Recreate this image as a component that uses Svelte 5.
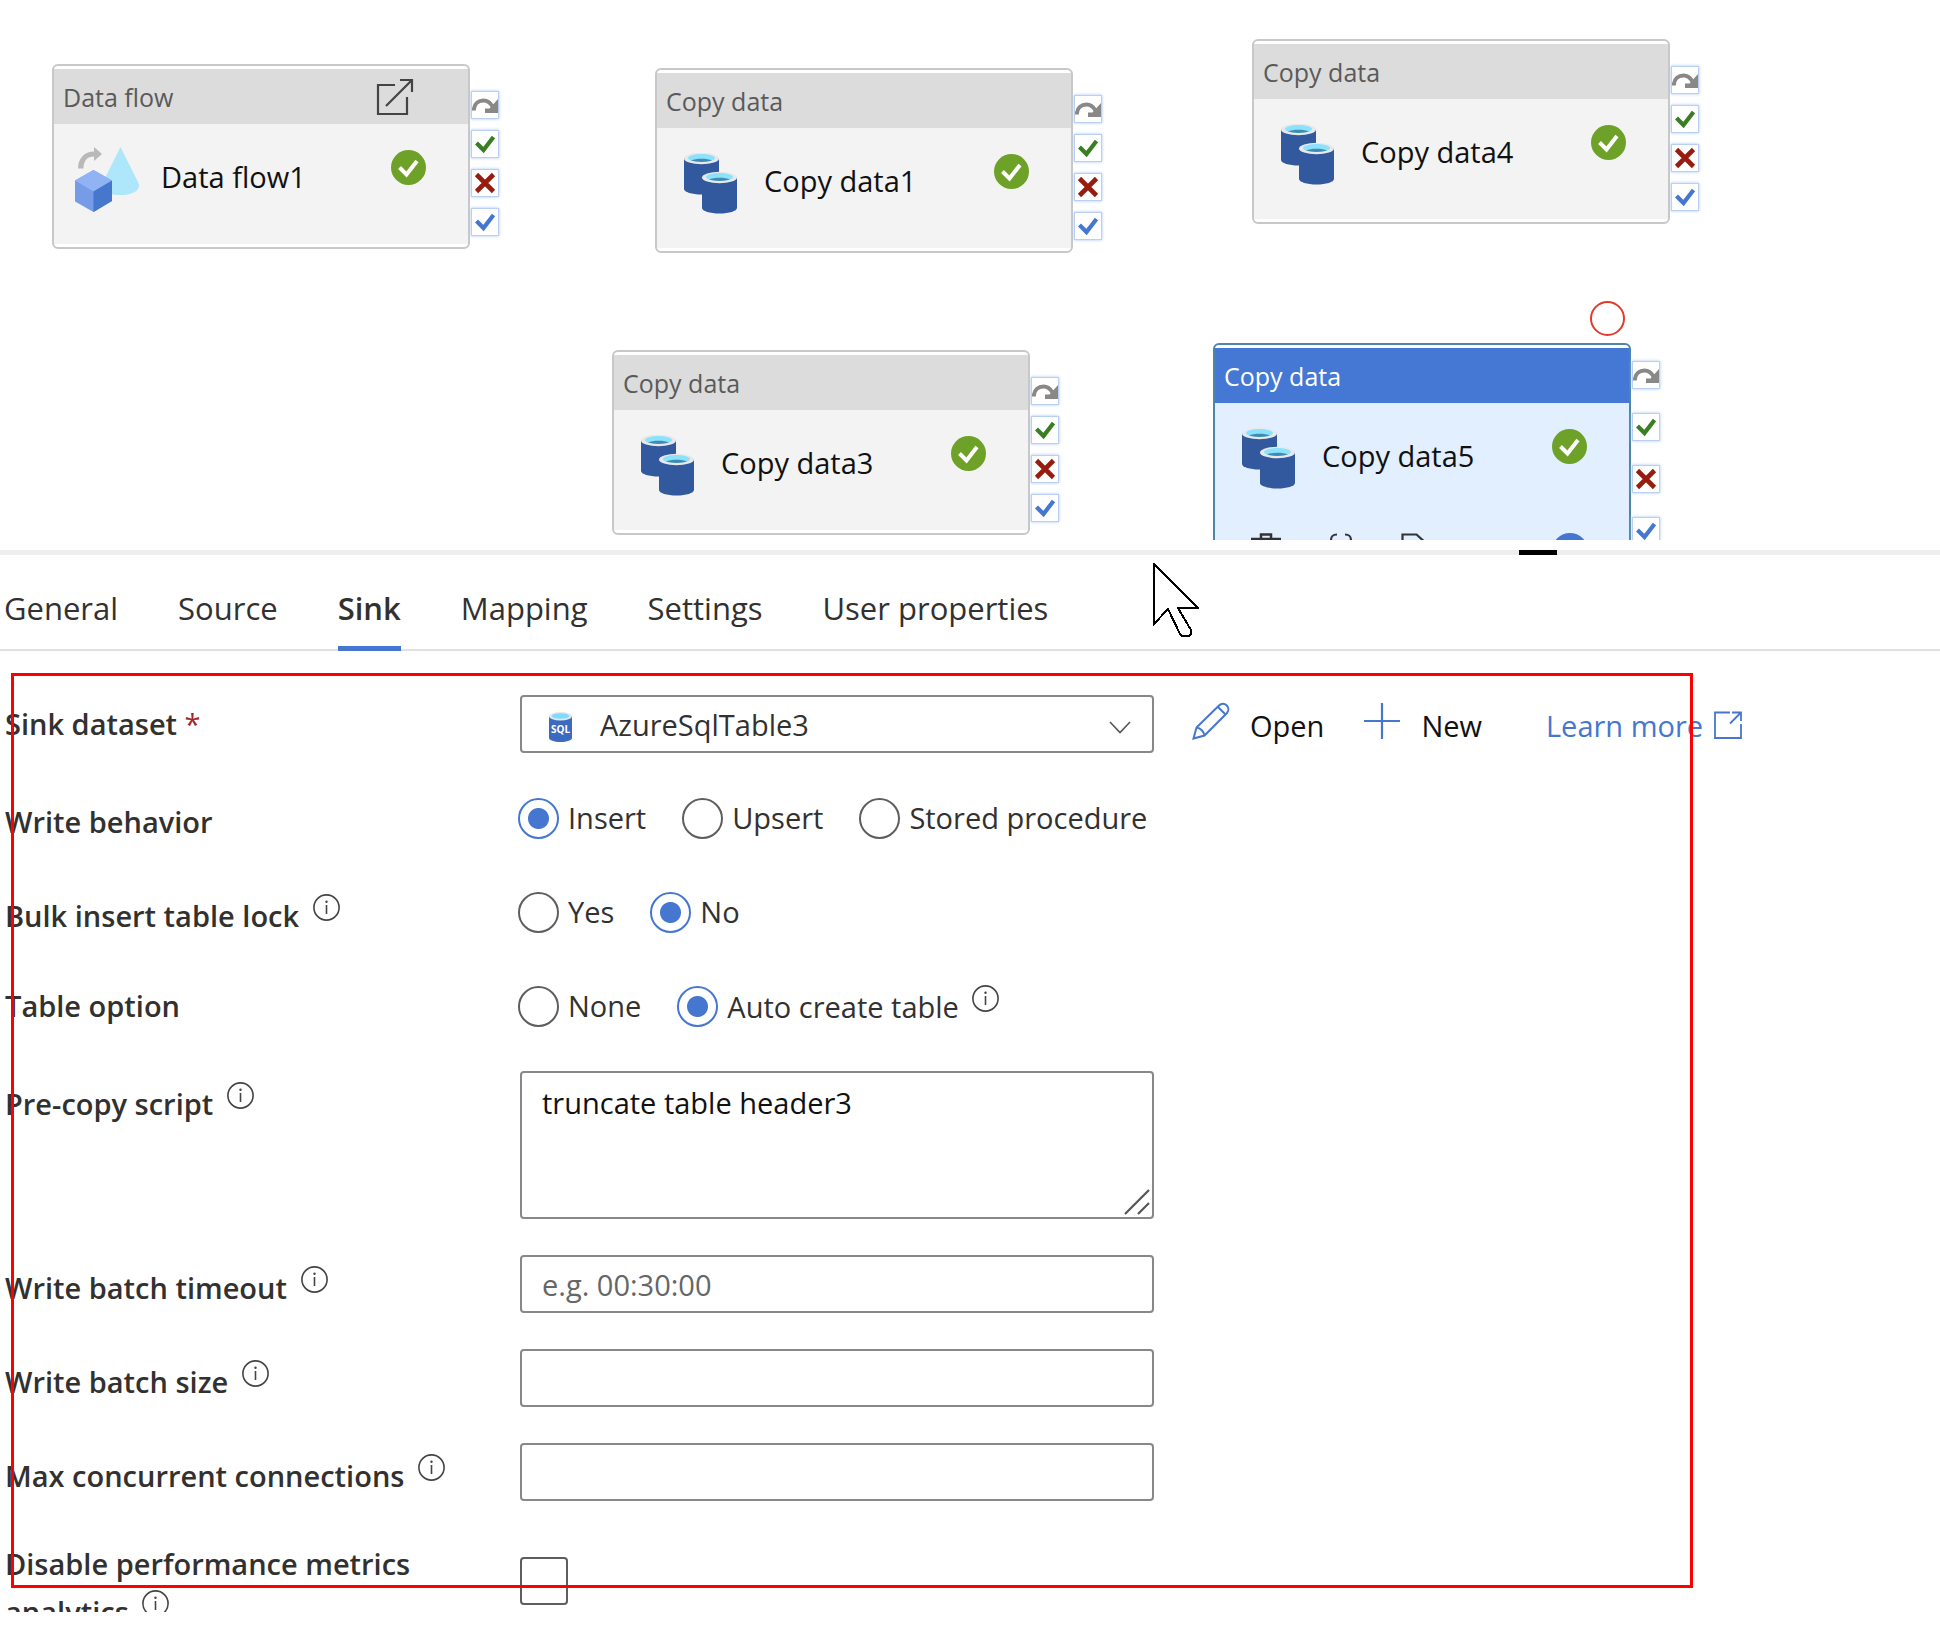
<script>
    const activities = [
        { type: "Data flow", name: "Data flow1", icon: "flow", x: 52, y: 64, open: true },
        { type: "Copy data", name: "Copy data1", icon: "copy", x: 655, y: 68 },
        { type: "Copy data", name: "Copy data4", icon: "copy", x: 1252, y: 39 },
        { type: "Copy data", name: "Copy data3", icon: "copy", x: 612, y: 350 },
        { type: "Copy data", name: "Copy data5", icon: "copy", x: 1213, y: 343, selected: true },
    ];

    const ports = ["skip", "success", "failure", "completion"];

    const tabs = ["General", "Source", "Sink", "Mapping", "Settings", "User properties"];
    let activeTab = $state("Sink");

    let dataset = $state("AzureSqlTable3");
    let writeBehavior = $state("Insert");
    let tableLock = $state("No");
    let tableOption = $state("Auto create table");
    let preCopyScript = $state("truncate table header3");
    let batchTimeout = $state("");
    let batchSize = $state("");
    let maxConnections = $state("");
    let disableMetrics = $state(false);
</script>

{#snippet info()}
    <svg class="info" viewBox="0 0 27 27" aria-hidden="true">
        <circle cx="13.5" cy="13.5" r="12.6" fill="none" stroke="#444" stroke-width="1.6" />
        <path d="M13.5 11v9" stroke="#444" stroke-width="1.6" />
        <circle cx="13.5" cy="7.8" r="1.2" fill="#444" />
    </svg>
{/snippet}

{#snippet port(kind)}
    <span class="port">
        <svg viewBox="0 0 26 26" aria-hidden="true">
            {#if kind === "skip"}
                <path d="M1.8 18.5C2 11 7 8.500 11.500 8.500C16 8.500 18.500 11 20.500 14.500" fill="none" stroke="#8a8886" stroke-width="4" />
                <path d="M26 7v14H13v-4.500h4.500z" fill="#8a8886" />
            {:else if kind === "failure"}
                <path d="M4.500 4.500l17 17M21.500 4.500l-17 17" stroke="#981b0f" stroke-width="4.600" />
            {:else}
                <path d="M4.500 12l7 7L21.500 6" fill="none" stroke={kind === "success" ? "#3b7d23" : "#4577d0"} stroke-width="4.200" />
            {/if}
        </svg>
    </span>
{/snippet}

{#snippet barrel(x, y)}
    <path d="M{x} {y + 5}v31c0 3 8 5.500 17.500 5.500s17.500-2.500 17.500-5.500v-31z" fill="#32599e" />
    <ellipse cx={x + 17.5} cy={y + 5.5} rx="17.500" ry="5.800" fill="#e8e8e8" />
    <ellipse cx={x + 17.5} cy={y + 5} rx="13.500" ry="3.900" fill="#8be2fd" />
    <path d="M{x + 7} {y + 7.6}c5-2.600 16-2.600 21 0c-5 1.800-16 1.800-21 0z" fill="#3f8bb3" />
{/snippet}

<div class="page">
    <section class="canvas">
        {#each activities as activity}
            <div class="activity {activity.selected ? 'selected' : ''}" style="left: {activity.x}px; top: {activity.y}px">
                <div class="card">
                    <div class="card-header">
                        <span>{activity.type}</span>
                        {#if activity.open}
                            <button class="icon-button" aria-label="Open data flow">
                                <svg width="38" height="38" viewBox="0 0 38 38">
                                    <path d="M19 7H2v29h29V19M24 2h12v12M35.500 2.500L10 28" fill="none" stroke="#444" stroke-width="2.200" />
                                </svg>
                            </button>
                        {/if}
                    </div>
                    <div class="card-body">
                        <span class="card-icon">
                            {#if activity.icon === "flow"}
                                <svg width="65" height="65" viewBox="0 0 65 65" aria-hidden="true">
                                    <path d="M45.500 0l18 36c3 7-6 12-18 12s-21-5-18-12z" fill="#aee7fb" />
                                    <path d="M3 21.500C3 12 9 4.500 19 4.500V0l8 7-8 7V9.500C12 9.500 8.500 14 8.500 21.500z" fill="#b9b9b9" />
                                    <path d="M18.500 23L37 33.500V54L18.500 65 0 54.500V33.500z" fill="#769ce8" />
                                    <path d="M18.500 23L37 33.500 18.500 44.500 0 33.500z" fill="#92b3f3" />
                                    <path d="M37 33.500V54L18.500 65V44.500z" fill="#4577cd" />
                                </svg>
                            {:else}
                                <svg width="53" height="61" viewBox="0 0 53 61" aria-hidden="true">
                                    {@render barrel(0, 0)}
                                    {@render barrel(18, 19)}
                                </svg>
                            {/if}
                        </span>
                        <span class="name">{activity.name}</span>
                        <svg class="status" viewBox="0 0 35 35" aria-hidden="true">
                            <circle cx="17.500" cy="17.500" r="17.500" fill="#6ea127" />
                            <path d="M8.500 17.500l7 7L26 11" fill="none" stroke="#fff" stroke-width="4" />
                        </svg>
                    </div>
                    {#if activity.selected}
                        <div class="card-tools">
                            <button class="icon-button" aria-label="Delete">
                                <svg width="30" height="34" viewBox="0 0 30 34">
                                    <path d="M10 6V1.500h10V6M0 6h30M4 6v26h22V6" fill="none" stroke="#333" stroke-width="2.500" />
                                </svg>
                            </button>
                            <button class="icon-button" aria-label="View code">
                                <svg width="24" height="34" viewBox="0 0 24 34">
                                    <path d="M8 1.500c-5 0-6 2-6 6v5l-2 4M16 1.500c5 0 6 2 6 6v5l2 4" fill="none" stroke="#333" stroke-width="2.200" />
                                </svg>
                            </button>
                            <button class="icon-button" aria-label="Clone">
                                <svg width="28" height="34" viewBox="0 0 28 34">
                                    <path d="M1.500 34V1.500h14L26 11v23" fill="none" stroke="#333" stroke-width="2.200" />
                                </svg>
                            </button>
                            <button class="icon-button add" aria-label="Add output">
                                <svg width="36" height="36" viewBox="0 0 36 36">
                                    <circle cx="18" cy="18" r="18" fill="#4577d0" />
                                </svg>
                            </button>
                        </div>
                    {/if}
                </div>
                <div class="ports">
                    {#each ports as kind}
                        {@render port(kind)}
                    {/each}
                </div>
                {#if activity.selected}
                    <span class="breakpoint"></span>
                {/if}
            </div>
        {/each}
    </section>

    <div class="splitter"><span class="handle"></span></div>

    <nav class="tabs">
        {#each tabs as tab}
            <button class="tab {tab === activeTab ? 'active' : ''}" onclick={() => (activeTab = tab)}>{tab}</button>
        {/each}
        <svg class="pointer" viewBox="0 0 46 75" aria-hidden="true">
            <path d="M1 1V61L15 46L27 71L29 73H36L38 71V67L25 45H45z" fill="#fff" stroke="#000" stroke-width="2" shape-rendering="crispEdges" />
        </svg>
    </nav>

    <form class="settings" onsubmit={(e) => e.preventDefault()}>
        <div class="row">
            <label class="label compact" for="dataset">Sink dataset <span class="required">*</span></label>
            <div class="controls">
                <div class="box">
                    <svg class="sql" viewBox="0 0 23 30" aria-hidden="true">
                        <path d="M0 4v22c0 2.200 5 4 11.500 4S23 28.200 23 26V4z" fill="#3c6ac0" />
                        <ellipse cx="11.500" cy="4.300" rx="11.500" ry="4.300" fill="#e3e7ea" />
                        <ellipse cx="11.500" cy="4" rx="8.800" ry="2.800" fill="#7fdcf8" />
                        <text x="11.500" y="21" text-anchor="middle" font-size="10" font-weight="700" fill="#fff">SQL</text>
                    </svg>
                    <select id="dataset" bind:value={dataset}>
                        <option>AzureSqlTable3</option>
                    </select>
                    <svg class="chevron" viewBox="0 0 22 13" aria-hidden="true">
                        <path d="M1 1l10 10.500L21 1" fill="none" stroke="#555" stroke-width="1.600" />
                    </svg>
                </div>
                <div class="actions">
                    <button class="action" type="button">
                        <svg width="38" height="38" viewBox="0 0 38 38" aria-hidden="true">
                            <path d="M1.500 36.500l3-11L27 3.500c5-5 12.500 2 8 7.500L12.500 33.500zM4.500 25.500c4 .5 7.500 4 8 8M26 5l7.500 7.500" fill="none" stroke="#4577d0" stroke-width="2" />
                        </svg>
                        Open
                    </button>
                    <button class="action" type="button">
                        <svg width="38" height="38" viewBox="0 0 38 38" aria-hidden="true">
                            <path d="M19 1v36M1 19h36" stroke="#4577d0" stroke-width="2.200" />
                        </svg>
                        New
                    </button>
                    <a class="learn" href="#learn">
                        Learn more
                        <svg width="28" height="28" viewBox="0 0 28 28" aria-hidden="true">
                            <path d="M16 1.500H1V27h26V13M18 1.500h9V10M27 1.500L16 12.500" fill="none" stroke="#4577d0" stroke-width="1.800" />
                        </svg>
                    </a>
                </div>
            </div>
        </div>

        <div class="row" role="radiogroup" aria-labelledby="behavior-label">
            <span class="label" id="behavior-label">Write behavior</span>
            <div class="controls radios">
                {#each ["Insert", "Upsert", "Stored procedure"] as option}
                    <label><input type="radio" name="behavior" value={option} bind:group={writeBehavior} />{option}</label>
                {/each}
            </div>
        </div>

        <div class="row" role="radiogroup" aria-labelledby="lock-label">
            <span class="label" id="lock-label">Bulk insert table lock {@render info()}</span>
            <div class="controls radios">
                {#each ["Yes", "No"] as option}
                    <label><input type="radio" name="lock" value={option} bind:group={tableLock} />{option}</label>
                {/each}
            </div>
        </div>

        <div class="row" role="radiogroup" aria-labelledby="option-label">
            <span class="label compact" id="option-label">Table option</span>
            <div class="controls radios">
                <label><input type="radio" name="option" value="None" bind:group={tableOption} />None</label>
                <label>
                    <input type="radio" name="option" value="Auto create table" bind:group={tableOption} />
                    <span>Auto create table {@render info()}</span>
                </label>
            </div>
        </div>

        <div class="row">
            <label class="label" for="script">Pre-copy script {@render info()}</label>
            <div class="controls">
                <div class="box">
                    <textarea id="script" spellcheck="false" bind:value={preCopyScript}></textarea>
                    <svg class="grip" viewBox="0 0 26 26" aria-hidden="true">
                        <path d="M1 25L25 1M14 25L25 14" stroke="#555" stroke-width="2.200" />
                    </svg>
                </div>
            </div>
        </div>

        <div class="row">
            <label class="label" for="timeout">Write batch timeout {@render info()}</label>
            <div class="controls">
                <div class="box"><input id="timeout" type="text" placeholder="e.g. 00:30:00" bind:value={batchTimeout} /></div>
            </div>
        </div>

        <div class="row">
            <label class="label" for="size">Write batch size {@render info()}</label>
            <div class="controls">
                <div class="box"><input id="size" type="text" bind:value={batchSize} /></div>
            </div>
        </div>

        <div class="row">
            <label class="label" for="connections">Max concurrent connections {@render info()}</label>
            <div class="controls">
                <div class="box"><input id="connections" type="text" bind:value={maxConnections} /></div>
            </div>
        </div>

        <div class="row">
            <label class="label multiline" for="metrics">Disable performance metrics analytics {@render info()}</label>
            <div class="controls">
                <input id="metrics" type="checkbox" bind:checked={disableMetrics} />
            </div>
        </div>

        <div class="highlight"></div>
    </form>
</div>

<style>
    :global(body) {
        margin: 0;
        background: #fff;
    }

    .page {
        display: flex;
        flex-direction: column;
        height: 100vh;
        box-sizing: border-box;
        padding-bottom: 36px;
        overflow: hidden;
        font-family: "Segoe UI", "Open Sans", "Noto Sans", sans-serif;
        font-size: 29px;
        color: #323130;
    }

    button,
    input,
    select,
    textarea {
        box-sizing: border-box;
        margin: 0;
        font: inherit;
        color: inherit;
    }

    button {
        padding: 0;
        border: 0;
        background: none;
        cursor: pointer;
    }

    svg {
        flex: none;
    }

    /* pipeline canvas */
    .canvas {
        position: relative;
        flex: none;
        height: 540px;
        overflow: hidden;
    }

    .activity {
        position: absolute;
        display: flex;
        gap: 1px;
    }

    .card {
        box-sizing: border-box;
        width: 418px;
        height: 185px;
        padding: 3px 0;
        border: 2px solid #c8c8c8;
        border-radius: 6px;
        background: #fff;
    }

    .card-header {
        display: flex;
        align-items: center;
        justify-content: space-between;
        height: 55px;
        box-sizing: border-box;
        padding: 0 54px 0 9px;
        background: #dcdcdc;
        color: #5a5a5a;
        font-size: 25px;
    }

    .icon-button {
        display: flex;
    }

    .card-body {
        display: flex;
        height: 120px;
        padding: 0 42px 0 17px;
        background: #f3f3f3;
        color: #111;
        font-size: 29px;
    }

    .card-icon {
        display: flex;
        justify-content: center;
        align-items: center;
        width: 72px;
        height: 110px;
    }

    .name {
        flex: 1;
        padding-left: 18px;
        line-height: 106px;
    }

    .status {
        width: 35px;
        height: 35px;
        margin-top: 26px;
    }

    .selected .card {
        height: 250px;
        border-color: #4d86a9;
    }

    .selected .card-header {
        background: #4577d5;
        color: #fff;
    }

    .selected .card-body,
    .card-tools {
        background: #e1efff;
    }

    .card-tools {
        display: flex;
        gap: 48px;
        height: 54px;
        padding: 10px 41px 0 36px;
    }

    .add {
        margin-left: auto;
    }

    .ports {
        display: flex;
        flex-direction: column;
        gap: 11px;
        padding-top: 27px;
    }

    .selected .ports {
        gap: 24px;
        padding-top: 18px;
    }

    .port {
        display: flex;
        width: 26px;
        height: 26px;
        border: 1px solid #b9d0f2;
        background: #fff;
        box-shadow: 0 0 3px #a9c6f5;
    }

    .breakpoint {
        position: absolute;
        top: -42px;
        right: 35px;
        width: 31px;
        height: 31px;
        border: 2px solid #e23b2a;
        border-radius: 50%;
    }

    .splitter {
        flex: none;
        display: flex;
        justify-content: flex-end;
        height: 5px;
        margin-top: 10px;
        padding-right: 383px;
        background: #eee;
    }

    .handle {
        width: 38px;
        background: #000;
    }

    /* property tabs */
    .tabs {
        position: relative;
        flex: none;
        display: flex;
        gap: 60px;
        padding: 0 4px;
        height: 94px;
        border-bottom: 2px solid #e1e1e1;
        font-size: 31px;
    }

    .tab {
        box-sizing: border-box;
        height: 96px;
        padding-top: 14px;
        border-bottom: 5px solid transparent;
    }

    .tab.active {
        border-bottom-color: #4577d0;
        font-weight: 600;
    }

    .pointer {
        position: absolute;
        left: 1153px;
        top: 8px;
        width: 46px;
        height: 75px;
    }

    /* sink form */
    .settings {
        position: relative;
        flex: 1;
        min-height: 0;
        display: flex;
        flex-direction: column;
        gap: 36px;
        padding: 44px 0 0 5px;
        overflow: hidden;
    }

    .row {
        flex: none;
        display: flex;
        align-items: flex-start;
    }

    .label {
        flex: none;
        box-sizing: border-box;
        width: 515px;
        padding-top: 9px;
        font-weight: 600;
        line-height: 48px;
    }

    .label.compact {
        padding-top: 5px;
    }

    .label.multiline {
        padding-top: 3px;
    }

    .required {
        color: #a4262c;
        font-weight: 400;
    }

    .info {
        width: 27px;
        height: 27px;
        margin-left: 6px;
        vertical-align: 6px;
    }

    .controls {
        display: flex;
        align-items: center;
        min-height: 58px;
    }

    .box {
        position: relative;
        display: flex;
        width: 634px;
    }

    .box input,
    .box select,
    .box textarea {
        width: 100%;
        height: 58px;
        padding: 0 20px;
        border: 2px solid #8a8886;
        border-radius: 4px;
        background: #fff;
        appearance: none;
    }

    .box select {
        padding-left: 78px;
    }

    .box textarea {
        height: 148px;
        padding-top: 10px;
        line-height: 40px;
        color: #111;
        resize: none;
    }

    .box input::placeholder {
        color: #666;
        opacity: 1;
    }

    .sql {
        position: absolute;
        left: 29px;
        top: 17px;
        width: 23px;
        height: 30px;
    }

    .chevron {
        position: absolute;
        right: 23px;
        top: 26px;
        width: 22px;
        height: 13px;
        pointer-events: none;
    }

    .grip {
        position: absolute;
        right: 4px;
        bottom: 4px;
        width: 26px;
        height: 26px;
        pointer-events: none;
    }

    .actions {
        display: flex;
        align-items: center;
        gap: 39px;
        padding: 2px 0 0 38px;
    }

    .action {
        display: flex;
        align-items: center;
        gap: 20px;
        color: #111;
    }

    .action svg {
        margin-bottom: 8px;
    }

    .learn {
        display: flex;
        align-items: center;
        gap: 11px;
        margin-left: 25px;
        color: #4577d0;
        text-decoration: none;
    }

    .radios {
        gap: 36px;
        margin-left: -2px;
    }

    .radios label {
        display: flex;
        align-items: center;
        gap: 9px;
        line-height: 40px;
    }

    .radios input {
        flex: none;
        width: 41px;
        height: 41px;
        border: 2px solid #605e5c;
        border-radius: 50%;
        background: #fff;
        appearance: none;
    }

    .radios input:checked {
        border-color: #4577d0;
        background: radial-gradient(circle, #4577d0 10px, #fff 11px);
    }

    input[type="checkbox"] {
        width: 48px;
        height: 48px;
        margin-top: 20px;
        border: 2px solid #605e5c;
        border-radius: 4px;
        background: #fff;
        appearance: none;
    }

    input[type="checkbox"]:checked {
        background: #4577d0;
    }

    .highlight {
        position: absolute;
        left: 11px;
        top: 22px;
        box-sizing: border-box;
        width: 1682px;
        height: 915px;
        border: 3px solid #f00;
        pointer-events: none;
    }
</style>
